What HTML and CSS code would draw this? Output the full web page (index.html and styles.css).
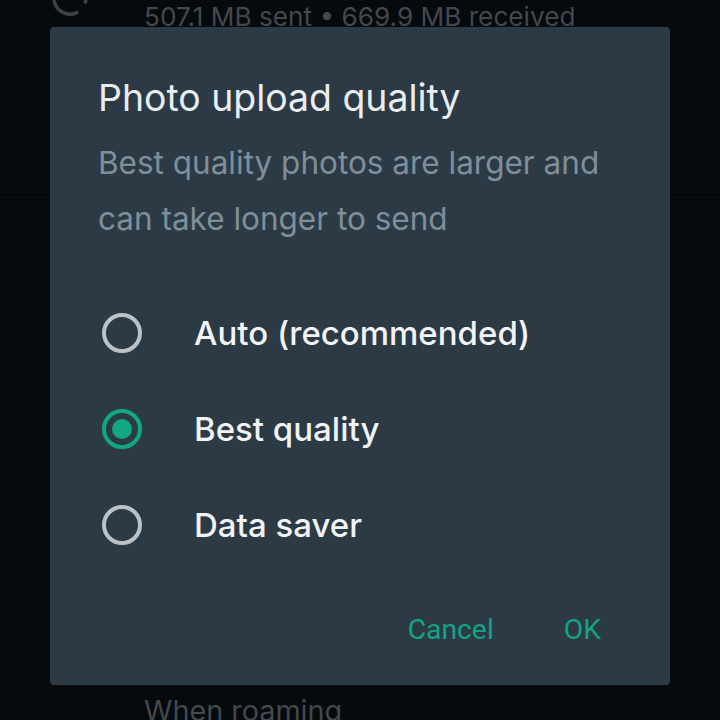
FILE: index.html
```html
<!DOCTYPE html>
<html lang="en">
<head>
<meta charset="utf-8">
<title>Photo upload quality</title>
<link rel="stylesheet" href="styles.css">
</head>
<body>
<div class="screen">
  <div class="row usage">
    <svg class="usage-icon" width="48" height="24" viewBox="0 0 48 24" aria-hidden="true"><path d="M4 -2A16 16 0 0 0 28 11.9" fill="none" stroke="#3e4245" stroke-width="3.5"/><path d="M35 3.5A16 16 0 0 0 36 -2" fill="none" stroke="#3e4245" stroke-width="3.5"/></svg>
    <span class="bg-text sent">507.1 MB sent • 669.9 MB received</span>
  </div>
  <div class="divider"></div>
  <div class="spacer"></div>
  <div class="row roaming"><span class="bg-text when">When roaming</span></div>
</div>
<div class="dialog" role="dialog">
  <h1 class="title">Photo upload quality</h1>
  <p class="desc">Best quality photos are larger and<br>can take longer to send</p>
  <div class="options">
    <div class="option"><span class="radio"></span><span class="label">Auto (recommended)</span></div>
    <div class="option"><span class="radio checked"></span><span class="label">Best quality</span></div>
    <div class="option"><span class="radio"></span><span class="label">Data saver</span></div>
  </div>
  <div class="actions">
    <span class="action">Cancel</span>
    <span class="action">OK</span>
  </div>
</div>
</body>
</html>
```
FILE: styles.css
```css
* { box-sizing: border-box; }
html, body { margin: 0; padding: 0; }
body {
  width: 720px;
  height: 720px;
  overflow: hidden;
  position: relative;
  background: #050a0e;
  font-family: Inter, "Liberation Sans", sans-serif;
}
.screen {
  height: 720px;
  display: flex;
  flex-direction: column;
}
.row { padding-left: 144px; }
.usage {
  position: relative;
  height: 197px;
}
.usage-icon { position: absolute; left: 50px; top: 0; }
.bg-text {
  display: block;
  color: #44484b;
}
.sent {
  font-size: 26.2px;
  line-height: 34px;
  white-space: nowrap;
}
.when {
  font-size: 28.8px;
  line-height: 36px;
}
.divider { height: 1px; background: #0d1215; }
.spacer { flex: 1; }
.roaming { height: 27px; }
.dialog {
  position: absolute;
  left: 50px;
  top: 27px;
  width: 620px;
  height: 658px;
  padding: 48px 48px 0;
  background: #2c3a45;
  border-radius: 4px;
  display: flex;
  flex-direction: column;
}
.title {
  margin: 0;
  font-size: 37.4px;
  font-weight: 400;
  line-height: 46px;
  color: #e9edef;
}
.desc {
  margin: 14px 0 0;
  font-size: 31.5px;
  line-height: 56px;
  color: #7f8f9a;
}
.options {
  margin-top: 38px;
  display: flex;
  flex-direction: column;
}
.option {
  height: 96px;
  display: flex;
  align-items: center;
  gap: 52px;
  padding-left: 4px;
}
.radio {
  width: 40px;
  height: 40px;
  flex: none;
  border-radius: 50%;
  border: 4px solid #bcc1c5;
  display: flex;
  align-items: center;
  justify-content: center;
}
.radio.checked { border-color: #10a882; }
.radio.checked::after {
  content: "";
  width: 20px;
  height: 20px;
  border-radius: 50%;
  background: #10a882;
}
.label {
  font-size: 33px;
  font-weight: 450;
  line-height: 40px;
  color: #f1f3f4;
}
.actions {
  margin-top: 39px;
  padding-right: 21px;
  display: flex;
  justify-content: flex-end;
  gap: 70px;
}
.action {
  font-family: Roboto, sans-serif;
  font-size: 28.3px;
  line-height: 36px;
  color: #13a384;
}
```
